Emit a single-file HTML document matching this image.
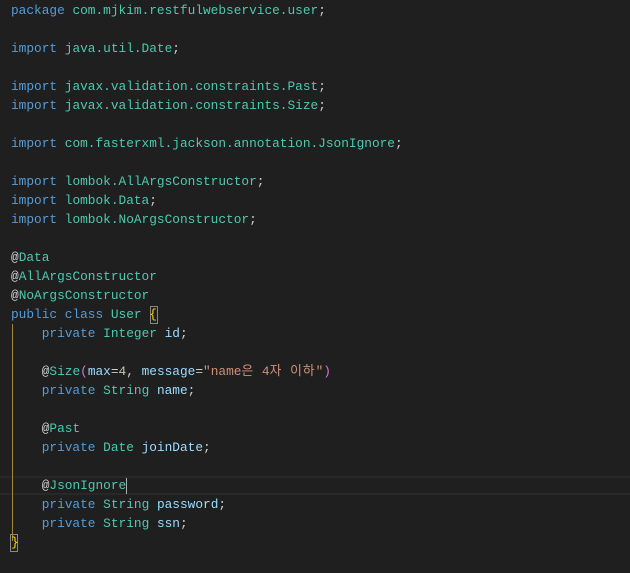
<!DOCTYPE html>
<html><head><meta charset="utf-8"><style>
html,body{margin:0;padding:0;background:#1f1f1f;width:630px;height:573px;overflow:hidden}
.c{position:absolute;left:11px;top:1px;font-family:"Liberation Mono","Noto Sans CJK KR",monospace;font-size:12.8px;line-height:19px;color:#cccccc;white-space:pre}
.k{color:#569cd6}.t{color:#4ec9b0}.v{color:#9cdcfe}.s{color:#ce9178}.n{color:#b5cea8}.p{color:#da70d6}.y{color:#ffd700}.a{color:#d4d4d4}
.ko{letter-spacing:1px}
.cur{position:absolute;left:0;top:476px;width:630px;height:19px;border-top:2px solid #282828;border-bottom:2px solid #282828;box-sizing:border-box}
.guide{position:absolute;left:12px;top:324px;width:1px;height:217px;background:#a08a3a}
.bm{position:absolute;border:1px solid #888;box-sizing:border-box}
.caret{position:absolute;left:126px;top:478px;width:1px;height:16px;background:#aeafad}
</style></head><body>
<div class="cur"></div>
<div class="guide"></div>
<div class="bm" style="left:150px;top:306px;width:8px;height:18px"></div>
<div class="bm" style="left:10px;top:534px;width:8px;height:18px"></div>
<div class="caret"></div>
<div class="c"><span class="k">package</span> <span class="t">com.mjkim.restfulwebservice.user</span>;

<span class="k">import</span> <span class="t">java.util.Date</span>;

<span class="k">import</span> <span class="t">javax.validation.constraints.Past</span>;
<span class="k">import</span> <span class="t">javax.validation.constraints.Size</span>;

<span class="k">import</span> <span class="t">com.fasterxml.jackson.annotation.JsonIgnore</span>;

<span class="k">import</span> <span class="t">lombok.AllArgsConstructor</span>;
<span class="k">import</span> <span class="t">lombok.Data</span>;
<span class="k">import</span> <span class="t">lombok.NoArgsConstructor</span>;

<span class="a">@</span><span class="t">Data</span>
<span class="a">@</span><span class="t">AllArgsConstructor</span>
<span class="a">@</span><span class="t">NoArgsConstructor</span>
<span class="k">public</span> <span class="k">class</span> <span class="t">User</span> <span class="y">{</span>
    <span class="k">private</span> <span class="t">Integer</span> <span class="v">id</span>;

    <span class="a">@</span><span class="t">Size</span><span class="p">(</span><span class="v">max</span>=<span class="n">4</span>, <span class="v">message</span>=<span class="s">"name<span class="ko">은</span> 4<span class="ko">자</span> <span class="ko">이하</span>"</span><span class="p">)</span>
    <span class="k">private</span> <span class="t">String</span> <span class="v">name</span>;

    <span class="a">@</span><span class="t">Past</span>
    <span class="k">private</span> <span class="t">Date</span> <span class="v">joinDate</span>;

    <span class="a">@</span><span class="t">JsonIgnore</span>
    <span class="k">private</span> <span class="t">String</span> <span class="v">password</span>;
    <span class="k">private</span> <span class="t">String</span> <span class="v">ssn</span>;
<span class="y">}</span></div>
</body></html>
